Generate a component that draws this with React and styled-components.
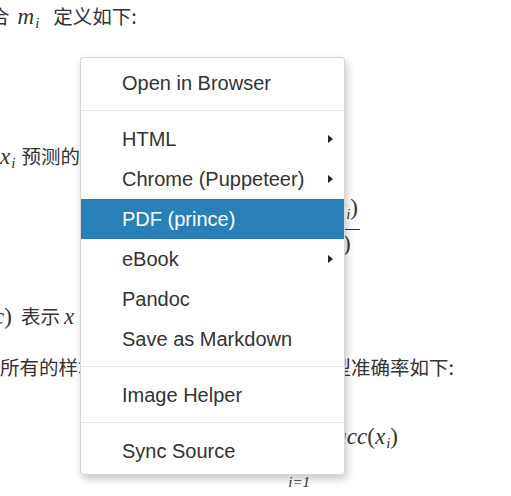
import React from 'react'
import styled, {createGlobalStyle} from 'styled-components'

const GlobalStyle = createGlobalStyle`
    html, body {
        margin: 0;
        padding: 0;
        background: #fff;
    }
    body {
        width: 511px;
        height: 496px;
        overflow: hidden;
    }
`

const Page = styled.div`
    position: relative;
    width: 511px;
    height: 496px;
    overflow: hidden;
    color: #333;
    font-family: "Liberation Sans", "Noto Sans CJK SC", sans-serif;
    font-size: 20px;
`

const Doc = styled.div`
    display: flex;
    flex-direction: column;
`

const Para = styled.p`
    margin: 0;
    margin-left: ${({$indent}) => $indent || 0}px;
    margin-top: ${({$top}) => $top || 0}px;
    height: 32px;
    line-height: 32px;
    white-space: nowrap;
`

const Cjk = styled.span`
    font-family: "Noto Sans CJK SC", sans-serif;
    font-size: 19.5px;
`

const InlineMath = styled.span`
    margin: 0 ${({$r}) => $r || 5}px 0 ${({$l}) => $l || 4}px;
`

const MathVar = styled.span`
    font-family: "Liberation Serif", serif;
    font-style: italic;
    font-size: 23px;
`

const Paren = styled.span`
    font-family: "Liberation Serif", serif;
    font-size: 23px;
`

const Sub = styled.sub`
    font-family: "Liberation Serif", serif;
    font-style: italic;
    font-size: 15px;
    vertical-align: -4px;
    margin-left: 1px;
`

const DisplayMath = styled.div`
    height: ${({$h}) => $h}px;
    display: flex;
    align-items: center;
    justify-content: flex-end;
    padding-right: ${({$right}) => $right}px;
    font-family: "Liberation Serif", serif;
    font-size: 23px;
    white-space: nowrap;
`

const Fraction = styled.span`
    display: inline-flex;
    flex-direction: column;
    align-items: center;
`

const Numer = styled.span`
    line-height: 24px;
    padding: 0 2px;
`

const Bar = styled.span`
    align-self: stretch;
    height: 1px;
    background: #333;
    margin: 3px 0 3px;
`

const Denom = styled.span`
    line-height: 22px;
`

const SumBlock = styled.div`
    display: flex;
    align-items: center;
    justify-content: flex-end;
    padding-right: 113px;
    height: 60px;
    margin-top: 25px;
    gap: 4px;
    font-family: "Liberation Serif", serif;
    font-size: 23px;
    white-space: nowrap;
`

const Sum = styled.span`
    display: inline-flex;
    flex-direction: column;
    align-items: center;
    line-height: 1;
    margin-top: 50px;
    margin-right: 20px;
`

const SumSign = styled.span`
    font-size: 34px;
`

const SumIdx = styled.span`
    font-size: 15px;
    font-style: italic;
    margin-top: 4px;
`

const Menu = styled.ul`
    position: absolute;
    left: 80px;
    top: 57px;
    width: 263px;
    margin: 0;
    padding: 5px 0 3px;
    list-style: none;
    background: #fff;
    border: 1px solid rgba(0, 0, 0, 0.16);
    border-radius: 4px;
    box-shadow: 2px 4px 8px rgba(0, 0, 0, 0.22);
    font-family: "Liberation Sans", Arial, sans-serif;
    font-size: 20px;
`

const Item = styled.li`
    height: 40px;
    display: flex;
    align-items: center;
    justify-content: space-between;
    padding: 0 11px 0 41px;
    color: ${({$active}) => ($active ? '#fff' : '#333')};
    background: ${({$active}) => ($active ? '#2980b9' : 'transparent')};
    cursor: pointer;
    white-space: nowrap;
`

const Arrow = styled.span`
    width: 0;
    height: 0;
    border-top: 4px solid transparent;
    border-bottom: 4px solid transparent;
    border-left: 5px solid #222;
`

const Divider = styled.li`
    height: 1px;
    margin: 7px 0 8px;
    background: #e5e5e5;
`

const menu = [
    {label: 'Open in Browser'},
    {divider: true},
    {label: 'HTML', sub: true},
    {label: 'Chrome (Puppeteer)', sub: true},
    {label: 'PDF (prince)', active: true},
    {label: 'eBook', sub: true},
    {label: 'Pandoc'},
    {label: 'Save as Markdown'},
    {divider: true},
    {label: 'Image Helper'},
    {divider: true},
    {label: 'Sync Source'},
]

function App() {
    return (
        <Page>
            <GlobalStyle />
            <Doc>
                <Para $indent={-10}>
                    <Cjk>合</Cjk>
                    <InlineMath $l={8} $r={14}><MathVar>m</MathVar><Sub>i</Sub></InlineMath>
                    <Cjk>定义如下:</Cjk>
                </Para>
                <DisplayMath $h={108} $right={200}>
                    <MathVar>m</MathVar><Sub>i</Sub>&nbsp;=&nbsp;<MathVar>p</MathVar>(<MathVar>y</MathVar><Sub>i</Sub>)
                </DisplayMath>
                <Para>
                    <MathVar>x</MathVar><Sub>i</Sub>
                    <InlineMath $l={1} $r={5} />
                    <Cjk>预测的结果</Cjk>
                </Para>
                <DisplayMath $h={112} $right={151}>
                    <MathVar>acc</MathVar>(<MathVar>x</MathVar><Sub>i</Sub>)&nbsp;=&nbsp;
                    <Fraction>
                        <Numer><MathVar>p</MathVar>(<MathVar>y</MathVar><Sub>i</Sub>|<MathVar>x</MathVar><Sub>i</Sub>)</Numer>
                        <Bar />
                        <Denom><MathVar>m</MathVar>(<MathVar>y</MathVar><Sub>i</Sub>)</Denom>
                    </Fraction>
                </DisplayMath>
                <Para $indent={-6} $top={16}>
                    <MathVar>c</MathVar><Paren>)</Paren>
                    <InlineMath />
                    <Cjk>表示</Cjk>
                    <InlineMath><MathVar>x</MathVar></InlineMath>
                </Para>
                <Para $top={19}>
                    <Cjk>所有的样本求平均值后，便可以得到模型准确率如下:</Cjk>
                </Para>
                <SumBlock>
                    <MathVar>Acc</MathVar>&nbsp;=&nbsp;
                    <Sum>
                        <SumSign>∑</SumSign>
                        <SumIdx>i=1</SumIdx>
                    </Sum>
                    <span><MathVar>acc</MathVar>(<MathVar>x</MathVar><Sub>i</Sub>)</span>
                </SumBlock>
            </Doc>
            <Menu>
                {menu.map((m, i) =>
                    m.divider ? (
                        <Divider key={i} />
                    ) : (
                        <Item key={i} $active={m.active}>
                            <span>{m.label}</span>
                            {m.sub && <Arrow />}
                        </Item>
                    )
                )}
            </Menu>
        </Page>
    )
}

export default App
